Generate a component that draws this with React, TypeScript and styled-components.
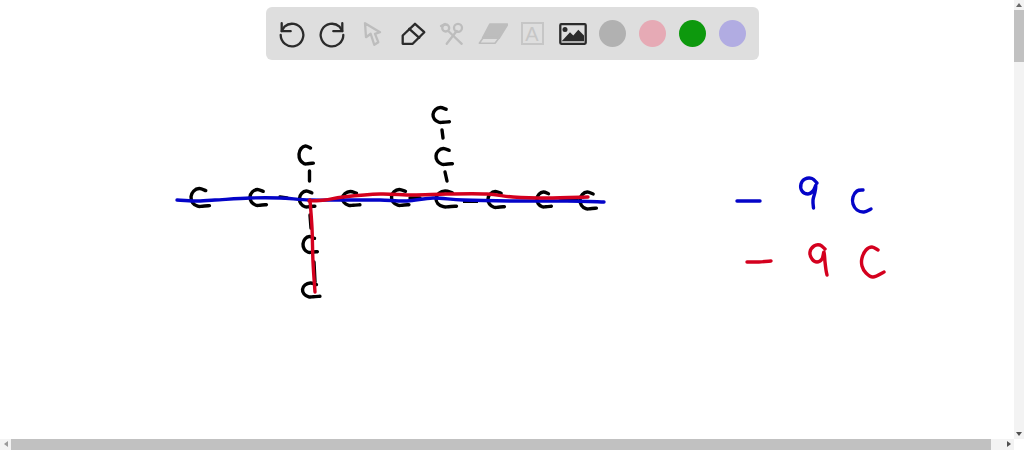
import React from 'react';
import styled, { createGlobalStyle } from 'styled-components';

const GlobalStyle = createGlobalStyle`
  html, body {
    margin: 0;
    padding: 0;
    background: #ffffff;
    overflow: hidden;
  }
`;

const Page = styled.div`
  width: 1024px;
  height: 450px;
  display: grid;
  grid-template-columns: 1fr 10px;
  grid-template-rows: 1fr 11px;
  background: #ffffff;
`;

const Canvas = styled.div`
  position: relative;
  overflow: hidden;
`;

const Board = styled.svg`
  display: block;
`;

const Toolbar = styled.div`
  position: absolute;
  top: 7px;
  left: 266px;
  height: 53px;
  display: flex;
  align-items: center;
  padding: 0 7px 0 6px;
  background: #dedede;
  border-radius: 6px;
`;

const ToolButton = styled.div`
  width: 40px;
  height: 40px;
  display: flex;
  align-items: center;
  justify-content: center;
`;

const ToolIcon = styled.svg`
  width: 32px;
  height: 32px;
  display: block;
  fill: none;
  stroke: ${(props) => props.color || '#2b2b2b'};
  stroke-width: 2.300;
  stroke-linecap: round;
  stroke-linejoin: round;
`;

const TextTool = styled.div`
  width: 19px;
  height: 19px;
  display: flex;
  align-items: center;
  justify-content: center;
  border: 2px solid #c6c6c6;
  color: #c6c6c6;
  font-family: 'Liberation Sans', Arial, sans-serif;
  font-size: 20px;
  line-height: 1;
`;

const Swatch = styled.div<{ $fill: string }>`
  width: 27px;
  height: 27px;
  border-radius: 50%;
  background: ${(props) => props.$fill};
`;

const VerticalBar = styled.div`
  display: flex;
  flex-direction: column;
  align-items: stretch;
  background: #f3f3f3;
`;

const HorizontalBar = styled.div`
  display: flex;
  align-items: stretch;
  background: #f3f3f3;
`;

const ArrowCell = styled.div`
  flex: none;
  width: ${(props: { $wide?: boolean }) => (props.$wide ? '11px' : '10px')};
  height: 10px;
  display: flex;
  align-items: center;
  justify-content: center;
`;

const VerticalThumb = styled.div`
  flex: none;
  height: 52px;
  background: #c1c1c1;
`;

const HorizontalThumb = styled.div`
  flex: none;
  width: 980px;
  background: #c1c1c1;
`;

const Spacer = styled.div`
  flex: 1;
`;

const Corner = styled.div`
  background: #ffffff;
`;

type Point = [number, number];

// catmull-rom through the sampled points, keeps the pen strokes round
const smooth = (pts: Point[]) => {
  let d = `M${pts[0][0]} ${pts[0][1]}`;
  for (let i = 0; i < pts.length - 1; i++) {
    const p0 = pts[i - 1] || pts[i];
    const p1 = pts[i];
    const p2 = pts[i + 1];
    const p3 = pts[i + 2] || p2;
    const c1x = p1[0] + (p2[0] - p0[0]) / 6;
    const c1y = p1[1] + (p2[1] - p0[1]) / 6;
    const c2x = p2[0] - (p3[0] - p1[0]) / 6;
    const c2y = p2[1] - (p3[1] - p1[1]) / 6;
    d += `C${c1x} ${c1y} ${c2x} ${c2y} ${p2[0]} ${p2[1]}`;
  }
  return d;
};

// the written carbons are all the same pen gesture, an open arc with a flick at the end
const penArc = (cx: number, cy: number, rx: number, ry: number): Point[] => {
  const arc = [-50, -95, -135, -175, 145, 105, 75].map((deg) => {
    const a = (deg * Math.PI) / 180;
    return [cx + rx * Math.cos(a), cy + ry * Math.sin(a)] as Point;
  });
  return [...arc, [cx + rx * 1.05, cy + ry * 0.9]];
};

const carbons: [number, number, number, number][] = [
  [200, 197.5, 9, 9],
  [258, 197.5, 8, 8],
  [306, 155, 7, 9],
  [307, 199, 7.5, 8],
  [351, 198.5, 8.5, 7],
  [310, 244.5, 7, 8],
  [311, 290, 8.5, 7],
  [400, 197.5, 8.5, 8],
  [441, 115, 8, 7.5],
  [444, 156.5, 8, 8],
  [446, 199, 10, 8],
  [496, 199.5, 8, 8],
  [544, 199.5, 7, 7.5],
  [588, 200.5, 8, 8.5],
];

const blackInk: Point[][] = [
  ...carbons.map(([cx, cy, rx, ry]) => penArc(cx, cy, rx, ry)),
  [[309.5, 171], [309.5, 181]],
  [[280, 197], [287, 198]],
  [[310, 215], [311, 228]],
  [[314, 262], [315, 282]],
  [[410, 198], [420, 198]],
  [[442, 130], [443, 138]],
  [[445, 172], [447, 181]],
  [[560, 198], [577, 199]],
];

const blueInk: Point[][] = [
  [[177, 200], [195, 201], [215, 200], [250, 198], [280, 198], [310, 200], [350, 200], [380, 200], [407, 201], [433, 198], [463, 200], [513, 201], [567, 201], [604, 202]],
  [[737, 201], [760, 201]],
  [[817, 183], [812, 178.500], [805, 179], [801, 184], [802, 191], [808, 194], [813, 191], [816, 185], [815, 192], [813, 200], [813.500, 208]],
  [[863, 190], [857, 191], [853, 197], [853, 204], [857, 210], [864, 212], [871, 209]],
];

const redInk: Point[][] = [
  [[309, 201], [325, 200], [343, 197], [380, 194], [413, 195], [447, 194], [487, 194], [513, 197], [547, 198], [588, 197]],
  [[310, 200], [312, 228], [313, 262], [315, 292]],
  [[747, 262], [759, 262], [771, 261]],
  [[825, 249], [820, 245], [814, 246], [810, 252], [812, 259], [817, 262], [822, 259], [824, 252], [825, 262], [826, 270], [827, 275]],
  [[878, 250], [872, 247], [866, 250], [862, 258], [862, 266], [866, 273], [873, 277], [884, 272]],
];

const InkLayer = ({ strokes, color, width }: { strokes: Point[][]; color: string; width: number }) => (
  <g fill="none" stroke={color} strokeWidth={width} strokeLinecap="round" strokeLinejoin="round">
    {strokes.map((s, i) => (
      <path key={i} d={smooth(s)} />
    ))}
  </g>
);

const swatches = ['#b1b1b1', '#e6aab5', '#0d990d', '#b1ace2'];

const App = () => {
  return (
    <Page>
      <GlobalStyle />
      <Canvas>
        <Board width="1014" height="439" viewBox="0 0 1014 439">
          <InkLayer strokes={blackInk} color="#000000" width={3.4} />
          <line x1="463" y1="201" x2="478" y2="201" stroke="#000000" strokeWidth="4" />
          <InkLayer strokes={blueInk} color="#0404c8" width={3.4} />
          <InkLayer strokes={redInk} color="#d4001e" width={3.4} />
        </Board>
        <Toolbar>
          <ToolButton>
            <ToolIcon viewBox="0 0 32 32">
              <path d="M4.700 17a11.300 11.300 0 1 0 3.800-8.400L5.700 13" />
              <path d="M5.700 5.200v8h9" />
            </ToolIcon>
          </ToolButton>
          <ToolButton>
            <ToolIcon viewBox="0 0 32 32">
              <path d="M27.300 17a11.300 11.300 0 1 1-3.800-8.400L26.300 13" />
              <path d="M26.300 5.200v8h-9" />
            </ToolIcon>
          </ToolButton>
          <ToolButton>
            <ToolIcon viewBox="0 0 32 32" color="#bdbdbd">
              <path d="M9 5.200l1 14 4.700-3.400 3.600 11 4-2.600L19 15.800l5-1.600z" />
            </ToolIcon>
          </ToolButton>
          <ToolButton>
            <ToolIcon viewBox="0 0 32 32">
              <path d="M6.700 17.500v8.300h10L28.300 14.200 19 5.800z" />
              <path d="M13.300 10.800l10 9" />
            </ToolIcon>
          </ToolButton>
          <ToolButton>
            <ToolIcon viewBox="0 0 32 32" color="#bdbdbd">
              <path d="M10.700 25.800L20.700 13" />
              <path d="M25.700 25.800L12.300 13" />
              <circle cx="9.700" cy="10" r="3.500" />
              <circle cx="22" cy="9.800" r="4" />
              <path d="M5 8l4-2" />
            </ToolIcon>
          </ToolButton>
          <ToolButton>
            <ToolIcon viewBox="0 0 32 32" color="#bdbdbd">
              <path d="M14 6.500h17.300L23 19.800H7z" fill="#bdbdbd" />
              <path d="M7 20L3.300 25.200H19L23 20" strokeWidth="1.600" />
            </ToolIcon>
          </ToolButton>
          <ToolButton>
            <TextTool>A</TextTool>
          </ToolButton>
          <ToolButton>
            <ToolIcon viewBox="0 0 32 32">
              <rect x="4.300" y="6.200" width="25.400" height="19.600" rx="1" />
              <circle cx="9" cy="11.500" r="2.500" fill="#2b2b2b" stroke="none" />
              <path d="M5.700 23.200L14 14.200l3.300 3.300 5-5.700 5.700 5.700v5.700z" fill="#2b2b2b" stroke="none" />
            </ToolIcon>
          </ToolButton>
          {swatches.map((c) => (
            <ToolButton key={c}>
              <Swatch $fill={c} />
            </ToolButton>
          ))}
        </Toolbar>
      </Canvas>
      <VerticalBar>
        <ArrowCell>
          <svg width="6" height="4" viewBox="0 0 6 4">
            <path d="M0 4L3 0l3 4z" fill="#6a6a6a" />
          </svg>
        </ArrowCell>
        <VerticalThumb />
        <Spacer />
        <ArrowCell>
          <svg width="6" height="4" viewBox="0 0 6 4">
            <path d="M0 0l3 4 3-4z" fill="#505050" />
          </svg>
        </ArrowCell>
      </VerticalBar>
      <HorizontalBar>
        <ArrowCell $wide>
          <svg width="4" height="6" viewBox="0 0 4 6">
            <path d="M4 0L0 3l4 3z" fill="#9a9a9a" />
          </svg>
        </ArrowCell>
        <HorizontalThumb />
        <Spacer />
        <ArrowCell $wide>
          <svg width="4" height="6" viewBox="0 0 4 6">
            <path d="M0 0l4 3-4 3z" fill="#505050" />
          </svg>
        </ArrowCell>
      </HorizontalBar>
      <Corner />
    </Page>
  );
};

export default App;
